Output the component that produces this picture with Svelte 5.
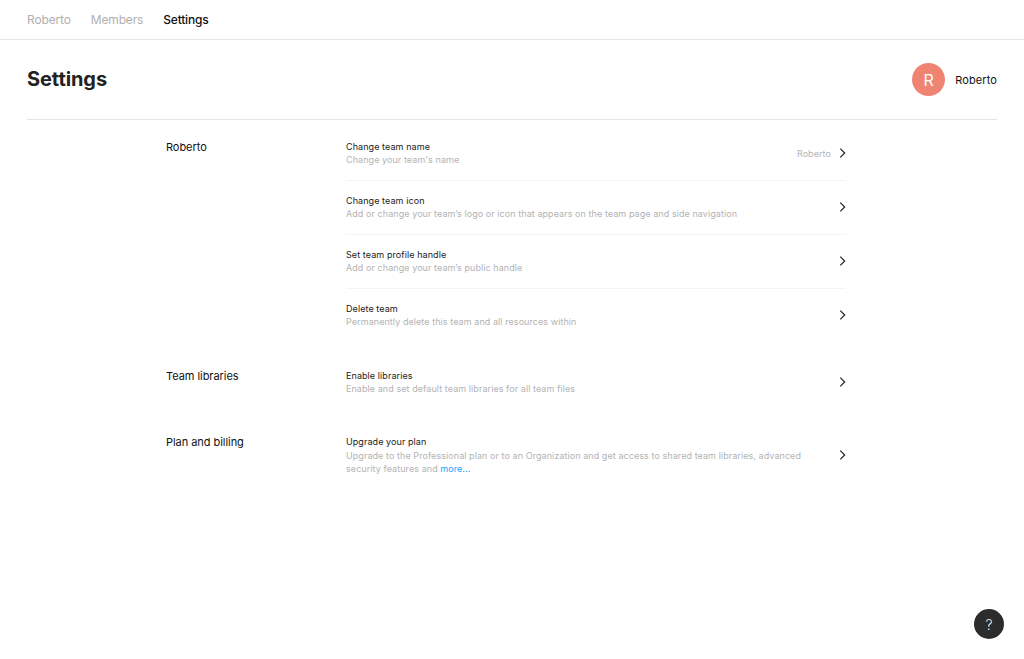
<script lang="ts">
	const tabs = [
		{ label: 'Roberto', active: false },
		{ label: 'Members', active: false },
		{ label: 'Settings', active: true }
	];

	const groups = [
		{
			title: 'Roberto',
			rows: [
				{ name: 'Change team name', desc: "Change your team's name", value: 'Roberto' },
				{ name: 'Change team icon', desc: 'Add or change your team’s logo or icon that appears on the team page and side navigation' },
				{ name: 'Set team profile handle', desc: 'Add or change your team’s public handle' },
				{ name: 'Delete team', desc: 'Permanently delete this team and all resources within' }
			]
		},
		{
			title: 'Team libraries',
			rows: [{ name: 'Enable libraries', desc: 'Enable and set default team libraries for all team files' }]
		},
		{
			title: 'Plan and billing',
			rows: [
				{
					name: 'Upgrade your plan',
					desc: 'Upgrade to the Professional plan or to an Organization and get access to shared team libraries, advanced security features and ',
					more: true
				}
			]
		}
	];
</script>

<div class="page">
	<nav class="tabs">
		{#each tabs as tab}
			<span class="tab" class:active={tab.active}>{tab.label}</span>
		{/each}
	</nav>

	<header class="header">
		<h1>Settings</h1>
		<div class="team">
			<div class="avatar">R</div>
			<span class="team-name">Roberto</span>
		</div>
	</header>

	<main class="content">
		{#each groups as group}
			<section class="group">
				<h2>{group.title}</h2>
				<div class="rows">
					{#each group.rows as row}
						<div class="row" class:tall={row.more}>
							<div class="text">
								<div class="name">{row.name}</div>
								<div class="desc">
									{row.desc}{#if row.more}<span class="more">more...</span>{/if}
								</div>
							</div>
							{#if row.value}
								<span class="value">{row.value}</span>
							{/if}
							<svg class="chevron" width="8" height="12" viewBox="0 0 8 12" fill="none">
								<path d="M2.3 1.6l4.4 4.4-4.4 4.4" stroke="#222" stroke-width="1.2" />
							</svg>
						</div>
					{/each}
				</div>
			</section>
		{/each}
	</main>

	<button class="help">?</button>
</div>

<style>
	:global(body) {
		background: #fff;
		font-family: Inter, "Liberation Sans", sans-serif;
	}

	.page {
		height: 659px;
		position: relative;
		overflow: hidden;
	}

	.tabs {
		display: flex;
		gap: 20px;
		height: 39px;
		align-items: center;
		padding: 0 27px;
		border-bottom: 1px solid #e5e5e5;
		font-size: 12px;
		line-height: 37px;
	}

	.tab {
		color: #b0b0b0;
		letter-spacing: -0.15px;
	}

	.tab.active {
		color: #111;
		font-weight: 500;
		letter-spacing: -0.2px;
	}

	.header {
		display: flex;
		justify-content: space-between;
		align-items: center;
		height: 79px;
		margin: 0 27px;
		border-bottom: 1px solid #e5e5e5;
	}

	h1 {
		margin: 0 0 1px;
		font-size: 20px;
		letter-spacing: -0.08px;
		font-weight: 700;
		color: #222;
	}

	.team {
		display: flex;
		align-items: center;
		gap: 10px;
	}

	.avatar {
		width: 33px;
		height: 33px;
		border-radius: 50%;
		background: #ef8472;
		color: #fff;
		font-size: 16px;
		display: flex;
		align-items: center;
		justify-content: center;
	}

	.team-name {
		font-size: 11px;
		letter-spacing: 0.1px;
		color: #111;
	}

	.content {
		padding: 7px 0 0 166px;
		width: 680px;
	}

	.group {
		display: grid;
		grid-template-columns: 180px 500px;
		margin-bottom: 12.5px;
	}

	h2 {
		margin: 0;
		padding-top: 13px;
		font-size: 11px;
		line-height: 14px;
		font-weight: 400;
		letter-spacing: -0.05px;
		color: #111;
	}

	.row {
		display: flex;
		align-items: center;
		padding: 13px 0 14px;
		border-bottom: 1px solid #f4f4f4;
	}

	.row:last-child {
		padding-bottom: 15px;
		border-bottom: none;
	}

	.text {
		flex: 1;
		padding-right: 30px;
	}

	.name {
		font-size: 9px;
		line-height: 13px;
		letter-spacing: 0.08px;
		color: #222;
	}

	.row.tall .name {
		margin-bottom: 1px;
	}

	.desc {
		font-size: 9px;
		line-height: 13px;
		letter-spacing: 0.07px;
		color: #b3b3b3;
	}

	.more {
		color: #18a0fb;
	}

	.value {
		font-size: 9px;
		letter-spacing: 0.07px;
		color: #b3b3b3;
		margin-right: 7px;
	}

	.chevron {
		flex: none;
	}

	.help {
		position: absolute;
		right: 20px;
		bottom: 20px;
		width: 30px;
		height: 30px;
		padding: 0;
		border: none;
		border-radius: 50%;
		background: #2c2c2c;
		color: #eee;
		font-family: inherit;
		font-size: 14px;
		font-weight: 300;
	}
</style>
